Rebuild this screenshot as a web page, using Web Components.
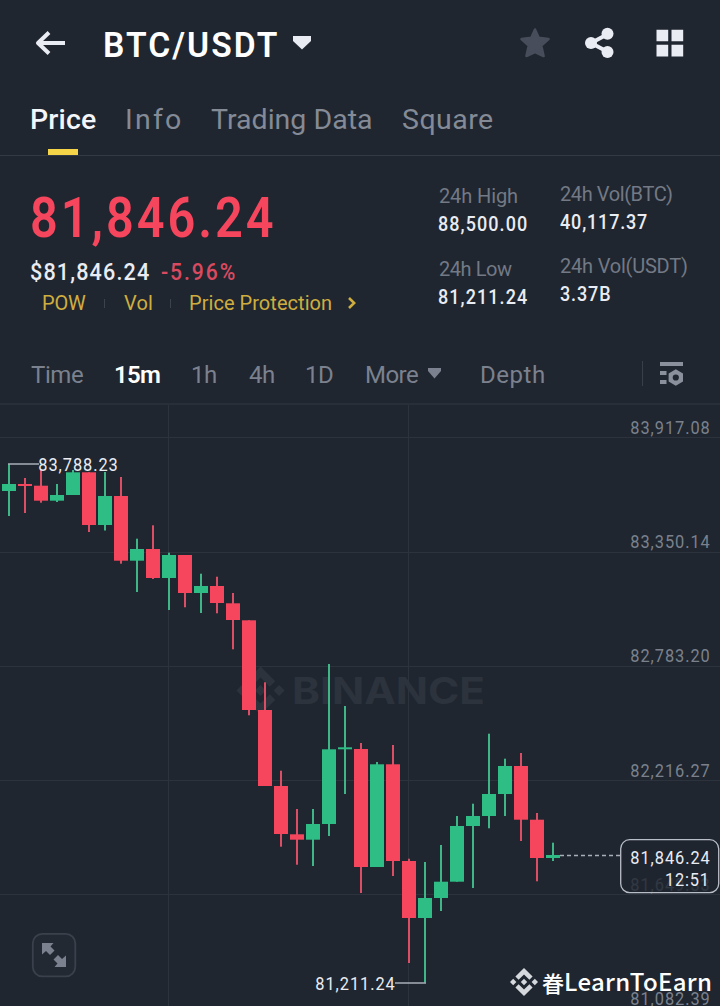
<!DOCTYPE html>
<html lang="en">
<head>
<meta charset="utf-8">
<title>BTC/USDT</title>
<style>
html,body{margin:0;padding:0;background:#1f262f}
body{width:720px;height:1006px;overflow:hidden;font-family:Roboto,"Liberation Sans",sans-serif}
</style>
</head>
<body>
<trade-page></trade-page>
<script>
const define=(name,html,after)=>customElements.define(name,class extends HTMLElement{
  constructor(){super();this.attachShadow({mode:'open'}).innerHTML=html;}
  connectedCallback(){if(after)after.call(this,this.shadowRoot);}
});

/* A label whose tracking is tuned so that its glyphs span exactly w pixels; sx condenses the glyphs. */
class FitText extends HTMLElement{
  constructor(){
    super();
    this.attachShadow({mode:'open'}).innerHTML='<style>:host{display:block;flex:none;white-space:pre}span{display:block;transform-origin:0 0}</style><span><slot></slot></span>';
  }
  connectedCallback(){
    const w=+this.getAttribute('w'),size=+this.getAttribute('size'),weight=this.getAttribute('weight')||400;
    const sx=+(this.getAttribute('sx')||1);
    const text=this.textContent,ctx=document.createElement('canvas').getContext('2d');
    ctx.font=`${weight} ${size}px Roboto`;
    const m=ctx.measureText(text);
    const ink=m.actualBoundingBoxLeft+m.actualBoundingBoxRight;
    const s=this.shadowRoot.querySelector('span').style;
    this.style.width=w+'px';
    s.font=`${weight} ${size}px/${this.getAttribute('line')||Math.round(size*1.2)}px Roboto,sans-serif`;
    s.letterSpacing=(w/sx-ink)/(text.length-1)+'px';
    s.marginLeft=m.actualBoundingBoxLeft*sx+'px';
    if(sx!==1)s.transform=`scaleX(${sx})`;
  }
}
customElements.define('fit-text',FitText);

define('pair-header',`<style>
:host{display:flex;height:88px;box-sizing:border-box;padding:25px 36px 0 35px;color:#fff}
svg{display:block;flex:none}
.back{margin-top:6px}.title{margin:1px 0 0 40px}.caret{margin:11px 0 0 16px}
.actions{display:flex;margin-left:auto;margin-top:2px}
.share{margin-left:35px}.grid{margin:2px 0 0 42px}
</style>
<svg class="back" width="30" height="24" viewBox="0 0 30 24" fill="none" stroke="#eaecf3" stroke-width="4"><path d="M2 12H30M14 1.5L3 12L14 22.5" stroke-linejoin="round"/></svg>
<fit-text class="title" w="172" size="35" weight="600" line="40" sx=".96">BTC/USDT</fit-text>
<svg class="caret" width="18" height="14" viewBox="0 0 18 14"><path d="M0 0H18V5L9 13.5L0 5Z" fill="#eaecf3"/></svg>
<div class="actions">
<svg width="30" height="32" viewBox="0 0 30 32"><path d="M15 2.5L18.7 10.8L28.5 12L21.3 18.7L23.6 29L15 25L6.4 29L8.7 18.7L1.5 12L11.3 10.8Z" fill="#474d5a" stroke="#474d5a" stroke-width="2.5" stroke-linejoin="round"/></svg>
<svg class="share" width="29" height="32" viewBox="0 0 29 32" fill="#eaecf3"><path d="M6 16L23 7M6 16L23 25" stroke="#eaecf3" stroke-width="4"/><circle cx="6" cy="16" r="6"/><circle cx="22.5" cy="6.8" r="6"/><circle cx="22.5" cy="25" r="6"/></svg>
<svg class="grid" width="28" height="28" viewBox="0 0 28 28" fill="#eaecf3"><path d="M.5.7H12.2V12.2H.5ZM15.5.7H27.2V12.2H15.5ZM.5 15.7H12.2V27.4H.5ZM15.5 15.7H27.2V27.4H15.5Z"/></svg>
</div>`);

define('section-tabs',`<style>
:host{display:flex;gap:31px;height:68px;box-sizing:border-box;padding:16px 32px 0;border-bottom:1px solid #343a45;color:#848a96}
.on{color:#f3f5fa;display:flex;flex-direction:column;align-items:center}
.on::after{content:"";width:30px;height:6px;background:#f5d547;margin-top:13px;margin-left:-2px}
.sq{margin-left:1px}
</style>
<div class="on"><fit-text w="64" size="28.5" weight="500" line="32">Price</fit-text></div>
<fit-text w="53" size="28.5" line="32">Info</fit-text>
<fit-text w="160" size="28.5" line="32">Trading Data</fit-text>
<fit-text class="sq" w="90" size="28.5" line="32">Square</fit-text>`);

define('price-stat',`<style>:host{display:block;height:72.5px}.l{color:#737985}.v{color:#eaecf3;margin-top:4px}</style>
<div class="l"><slot name="label"></slot></div><div class="v"><slot name="value"></slot></div>`);

define('price-summary',`<style>
:host{display:flex;height:186px;box-sizing:border-box}
.main{width:439px;padding:30px 0 0 32px;box-sizing:border-box;flex:none}
.big{color:#f6465d}
.row{display:flex;margin:9px 0 0 -1px;gap:12px;color:#eaecf3}
.red{color:#d94a60}
.tags{display:flex;margin:6px 0 0 11px;color:#cfae3f}
.tags i{width:1px;height:9px;background:#3d434d;margin:8px 19px 0 18px}
svg{margin:6px 0 0 17px}
.col{width:121px;flex:none}.c1{padding-top:28px}.c2{padding-top:25.5px}
</style>
<div class="main">
<fit-text class="big" w="241" size="56" weight="600" line="64" sx=".87">81,846.24</fit-text>
<div class="row"><fit-text w="118" size="23.5" weight="500" line="26" sx=".92">$81,846.24</fit-text><fit-text class="red" w="74" size="23.5" weight="500" line="26" sx=".9">-5.96%</fit-text></div>
<div class="tags"><fit-text w="43" size="20" line="24">POW</fit-text><i></i><fit-text w="28" size="20" line="24">Vol</fit-text><i></i><fit-text w="141" size="20" line="24">Price Protection</fit-text>
<svg width="8" height="12" viewBox="0 0 8 12" fill="none" stroke="#cfae3f" stroke-width="2.6"><path d="M1 1L6.2 6L1 11"/></svg></div>
</div>
<div class="col c1">
<price-stat><fit-text slot="label" w="78" size="20" line="24">24h High</fit-text><fit-text slot="value" w="88" size="20" weight="500" line="24" sx=".9">88,500.00</fit-text></price-stat>
<price-stat><fit-text slot="label" w="73" size="20" line="24">24h Low</fit-text><fit-text slot="value" w="88" size="20" weight="500" line="24" sx=".9">81,211.24</fit-text></price-stat>
</div>
<div class="col c2">
<price-stat><fit-text slot="label" w="112" size="20" line="24">24h Vol(BTC)</fit-text><fit-text slot="value" w="87" size="20" weight="500" line="24" sx=".9">40,117.37</fit-text></price-stat>
<price-stat><fit-text slot="label" w="127" size="20" line="24">24h Vol(USDT)</fit-text><fit-text slot="value" w="50" size="20" weight="500" line="24" sx=".9">3.37B</fit-text></price-stat>
</div>`);

define('interval-bar',`<style>
:host{display:flex;height:63px;box-sizing:border-box;padding:19px 36px 0 31px;border-bottom:2px solid #282f39;color:#7b818e}
.on{color:#fff}
fit-text+fit-text{margin-left:33px}
fit-text.on{margin-left:32px}
fit-text.d{margin-left:40px}
.caret{margin:7px 0 0 10px}
.set{margin-left:auto;display:flex}.set i{width:1px;height:25px;background:#393f4a;margin-right:16px}
</style>
<fit-text w="52" size="24" line="28">Time</fit-text>
<fit-text class="on" w="45" size="24" weight="600" line="28">15m</fit-text>
<fit-text w="23" size="24" line="28">1h</fit-text>
<fit-text w="25" size="24" line="28">4h</fit-text>
<fit-text w="26" size="24" line="28">1D</fit-text>
<fit-text w="52" size="24" line="28">More</fit-text>
<svg class="caret" width="13" height="11" viewBox="0 0 13 11"><path d="M0 0H13V3L6.5 10.5L0 3Z" fill="#7b818e"/></svg>
<fit-text class="d" w="63" size="24" line="28">Depth</fit-text>
<div class="set"><i></i><svg width="25" height="26" viewBox="0 0 25 26" fill="#8a909c"><path d="M1 1H24V5H1ZM1 10H7.5V14H1ZM1 19H7.5V23H1Z"/><path fill-rule="evenodd" d="M16.8 8.3L24 12.4V20.6L16.8 24.7L9.6 20.6V12.4ZM16.8 13.4A3.1 3.1 0 1 0 16.8 19.6A3.1 3.1 0 1 0 16.8 13.4Z"/></svg></div>`);

/* Each candle: colour, wick top, body top, body bottom, wick bottom. */
const candles=[
['g',464,484,491,516],['r',478,484,486,513],['r',470,485.7,500.7,502.7],['g',484,495,500.7,502],['g',470,472.3,495,495],
['r',472.3,472.3,525,532],['g',472,496,525,530.5],['r',477,496,560.7,563.7],['g',538.7,549,560.7,592],['r',525.3,549,578,579],
['g',552.7,555,578,610],['r',555,555,593,607.3],['g',573.7,586,593,613],['r',576.7,586,603,613.3],['r',593,603.3,620,649.3],
['r',620.3,620.3,710,715.3],['r',682.3,710,786,786],['r',770.7,786,834,846.7],['r',809,834.3,839.7,864.7],['g',809,824,839.7,866],
['g',664,749.3,824,836],['g',706,747.3,749.3,794],['r',743,749,867,893],['g',762,764.3,867,867],['r',745,764.3,861,876],
['r',858.7,861,918,963],['g',862,898,918,982.7],['g',845,881.7,898,911],['g',816,826,881.7,881.7],['g',803.7,816,826,888],
['g',733.7,794,816,828.3],['g',758.7,766,794,816],['r',753,766,819.7,841],['r',813,819.7,858,881.3],['g',842.7,855,858,861]];
const mark=(cx,cy,s,fill)=>`<g transform="translate(${cx} ${cy}) scale(${s})" fill="${fill}"><path d="M0-14L8.6-5.4L5.4-2.2L0-7.6L-5.4-2.2L-8.6-5.4ZM0 14L8.6 5.4L5.4 2.2L0 7.6L-5.4 2.2L-8.6 5.4ZM0-3.2L3.2 0L0 3.2L-3.2 0ZM-10.8-3.2L-7.6 0L-10.8 3.2L-14 0ZM10.8-3.2L14 0L10.8 3.2L7.6 0Z"/></g>`;
define('candle-chart',`<style>:host{display:block;height:601px}svg{display:block}
text{font-family:Roboto,sans-serif;font-size:18px}.ax{fill:#7b818c}.w{fill:#eaecf3}</style><svg width="720" height="601" viewBox="0 405 720 601"></svg>`,function(root){
  const k=.91;
  const t=(x,y,w,s,c)=>`<text transform="translate(${x} ${y}) scale(${k} 1)" textLength="${w/k}" class="${c}">${s}</text>`;
  let h='<g stroke="#2c333d">';
  for(const y of [437.5,552.5,666.5,780.5,894.5])h+=`<path d="M0 ${y}H720"/>`;
  h+='<path d="M168.5 405V1006M408.5 405V1006"/></g>';
  h+=mark(260.5,690.5,1.72,'#2c333d');
  h+='<text x="292" y="704" textLength="193" lengthAdjust="spacingAndGlyphs" style="font:700 37px Inter,sans-serif;fill:#2c333d">BINANCE</text>';
  candles.forEach(([c,a,b,d,e],i)=>{
    const x=9+16*i,body=c=='g'?'#2ebd85':'#f6465d',wick=c=='g'?'#3fb588':'#da4f65';
    h+=`<rect x="${x-1}" y="${a}" width="2" height="${e-a}" fill="${wick}"/><rect x="${x-7}" y="${b}" width="14" height="${d-b}" fill="${body}"/>`;
  });
  h+='<path d="M8 464H39M395 983H426" stroke="#a9aeb8" stroke-width="1.5"/><path d="M560 855.5H620" stroke="#a9aeb8" stroke-width="1.3" stroke-dasharray="4 3"/>';
  h+=t(38.3,471,79.5,'83,788.23','w')+t(315.3,990,79.5,'81,211.24','w');
  [[434,'83,917.08'],[548,'83,350.14'],[662,'82,783.20'],[777,'82,216.27'],[891,'81,649.33'],[1005,'81,082.39']].forEach(([y,s])=>{h+=t(630.3,y,79.5,s,'ax')});
  h+='<rect x="620.7" y="839.7" width="98" height="53" rx="9" fill="#1f262f" fill-opacity=".8" stroke="#b9bdc6" stroke-width="1.3"/>';
  h+=t(630.3,864,79.5,'81,846.24','w')+t(665,886,44,'12:51','w');
  h+='<rect x="32.8" y="933.8" width="42.5" height="42.5" rx="9.5" fill="#222933" stroke="#3a414c" stroke-width="1.8"/><g fill="#7b818e"><path d="M42 943H53.5L50.5 946.5L54.5 950.5L50 955L46 951L42 954.5Z"/><path d="M66 967H54.5L57.5 963.5L53.5 959.5L58 955L62 959L66 955.5Z"/></g>';
  h+=mark(524,982,1,'#d5d8dd');
  h+='<text x="542" y="992" textLength="22" style="font:500 22px \'Noto Sans CJK SC\',sans-serif;fill:#fff">眷</text><text x="564" y="990.5" textLength="148" style="font:500 24px \'Noto Sans CJK SC\',sans-serif;fill:#fff">LearnToEarn</text>';
  root.querySelector('svg').innerHTML=h;
});

define('trade-page',`<style>:host{display:flex;flex-direction:column;width:720px;height:1006px;background:#1f262f;overflow:hidden}:host>*{flex:none}</style>
<pair-header></pair-header><section-tabs></section-tabs><price-summary></price-summary><interval-bar></interval-bar><candle-chart></candle-chart>`);
</script>
</body>
</html>
